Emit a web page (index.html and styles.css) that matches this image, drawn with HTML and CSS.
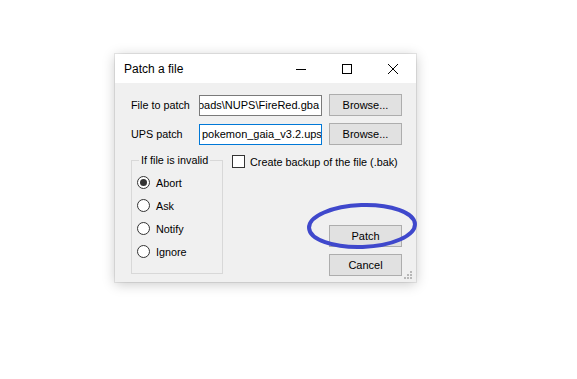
FILE: index.html
```html
<!DOCTYPE html>
<html lang="en">
<head>
  <meta charset="UTF-8">
  <title>Patch a file</title>
  <link rel="stylesheet" href="styles.css">
</head>
<body>
  <div class="window">
    <div class="titlebar">
      <span class="title">Patch a file</span>
      <div class="controls">
        <span class="ctl">
          <svg width="10" height="10" viewBox="0 0 10 10"><path d="M0 5.5h10" stroke="#000" stroke-width="1"/></svg>
        </span>
        <span class="ctl">
          <svg width="10" height="10" viewBox="0 0 10 10"><rect x="0.5" y="0.5" width="9" height="9" fill="none" stroke="#000" stroke-width="1"/></svg>
        </span>
        <span class="ctl">
          <svg width="10" height="10" viewBox="0 0 10 10"><path d="M0 0L10 10M10 0L0 10" stroke="#000" stroke-width="1"/></svg>
        </span>
      </div>
    </div>

    <div class="content">
      <div class="row">
        <label class="label">File to patch</label>
        <div class="textbox"><span>C:\Users\Player\Downloads\NUPS\FireRed.gba</span></div>
        <button class="btn">Browse...</button>
      </div>
      <div class="row">
        <label class="label">UPS patch</label>
        <div class="textbox focus"><span>pokemon_gaia_v3.2.ups<i class="caret"></i></span></div>
        <button class="btn">Browse...</button>
      </div>

      <div class="bottom">
        <fieldset class="group">
          <legend>If file is invalid</legend>
          <div class="radio checked"><span class="dot"></span>Abort</div>
          <div class="radio"><span class="dot"></span>Ask</div>
          <div class="radio"><span class="dot"></span>Notify</div>
          <div class="radio"><span class="dot"></span>Ignore</div>
        </fieldset>

        <div class="side">
          <div class="check"><span class="box"></span>Create backup of the file (.bak)</div>
          <div class="actions">
            <button class="btn">Patch</button>
            <button class="btn">Cancel</button>
          </div>
        </div>
      </div>
    </div>

    <svg class="grip" width="10" height="10" viewBox="0 0 10 10">
      <rect x="7" y="1" width="2" height="2" fill="#b8b8b8"/>
      <rect x="4" y="4" width="2" height="2" fill="#b8b8b8"/>
      <rect x="7" y="4" width="2" height="2" fill="#b8b8b8"/>
      <rect x="1" y="7" width="2" height="2" fill="#b8b8b8"/>
      <rect x="4" y="7" width="2" height="2" fill="#b8b8b8"/>
      <rect x="7" y="7" width="2" height="2" fill="#b8b8b8"/>
    </svg>

    <svg class="circle" width="120" height="60" viewBox="0 0 120 60">
      <ellipse cx="60" cy="30" rx="53" ry="21" fill="none" stroke="#3f48cc" stroke-width="4" transform="rotate(-2 60 30)"/>
    </svg>
  </div>
</body>
</html>
```

FILE: styles.css
```css
/* Page */
body {
  margin: 0;
  width: 577px;
  height: 379px;
  padding: 54px 0 0 115px;
  box-sizing: border-box;
  background-color: #fff;
  font-family: 'Liberation Sans', Arial, sans-serif;
  font-size: 10.8px;
  color: #000;
}

/* Window */
.window {
  position: relative;
  width: 301px;
  height: 228px;
  background-color: #f0f0f0;
  box-shadow: 0 2px 12px rgba(0, 0, 0, 0.22);
  outline: 1px solid rgba(0, 0, 0, 0.08);
  display: flex;
  flex-direction: column;
}

.titlebar {
  height: 29px;
  background-color: #fff;
  display: flex;
  align-items: center;
  justify-content: space-between;
}

.title {
  font-size: 12px;
  padding-left: 9px;
}

.controls {
  display: flex;
  height: 100%;
}

.ctl {
  width: 46px;
  height: 100%;
  display: flex;
  align-items: center;
  justify-content: center;
}

/* Content */
.content {
  flex: 1;
  padding: 11px 14px 6px 16px;
  display: flex;
  flex-direction: column;
}

.row {
  display: flex;
  align-items: center;
  height: 22px;
  margin-bottom: 7px;
}

.label {
  width: 68px;
  flex-shrink: 0;
  white-space: nowrap;
}

.textbox {
  flex-shrink: 0;
  box-sizing: border-box;
  width: 123px;
  height: 21px;
  background-color: #fff;
  border: 1px solid #7a7a7a;
  display: flex;
  align-items: center;
  justify-content: flex-end;
  overflow: hidden;
  white-space: nowrap;
  font-size: 11px;
  padding-right: 2px;
}

.textbox.focus {
  justify-content: flex-start;
  border-color: #0078d7;
  padding: 0 0 0 2px;
}

.caret {
  display: inline-block;
  width: 1px;
  height: 14px;
  background-color: #000;
  vertical-align: -3px;
}

.btn {
  flex-shrink: 0;
  width: 73px;
  height: 22px;
  margin-left: 7px;
  padding: 0;
  background-color: #e1e1e1;
  border: 1px solid #adadad;
  font-family: inherit;
  font-size: 11px;
  color: #000;
}

/* Bottom half */
.bottom {
  flex: 1;
  display: flex;
  margin-top: 2px;
}

.group {
  width: 92px;
  flex-shrink: 0;
  box-sizing: border-box;
  margin: 0;
  padding: 5px 0 0 5px;
  border: 1px solid #d8d8d8;
  margin-bottom: 2px;
}

.group legend {
  padding: 0 2px;
  margin-left: 2px;
}

.radio {
  height: 23px;
  display: flex;
  align-items: center;
}

.dot {
  width: 11px;
  height: 11px;
  border: 1px solid #333;
  border-radius: 50%;
  background-color: #fff;
  margin-right: 6px;
  display: flex;
  align-items: center;
  justify-content: center;
}

.radio.checked .dot::after {
  content: '';
  width: 7px;
  height: 7px;
  border-radius: 50%;
  background-color: #333;
}

.side {
  flex: 1;
  display: flex;
  flex-direction: column;
  justify-content: space-between;
  padding-left: 9px;
  padding-top: 1px;
}

.check {
  display: flex;
  align-items: center;
  white-space: nowrap;
}

.box {
  width: 11px;
  height: 11px;
  border: 1px solid #333;
  background-color: #fff;
  margin-right: 5px;
}

.actions {
  display: flex;
  flex-direction: column;
  align-items: flex-end;
  gap: 7px;
}

.actions .btn {
  margin-left: 0;
}

/* Overlays */
.grip {
  position: absolute;
  right: 3px;
  bottom: 2px;
}

.circle {
  position: absolute;
  left: 187px;
  top: 142px;
}
```
